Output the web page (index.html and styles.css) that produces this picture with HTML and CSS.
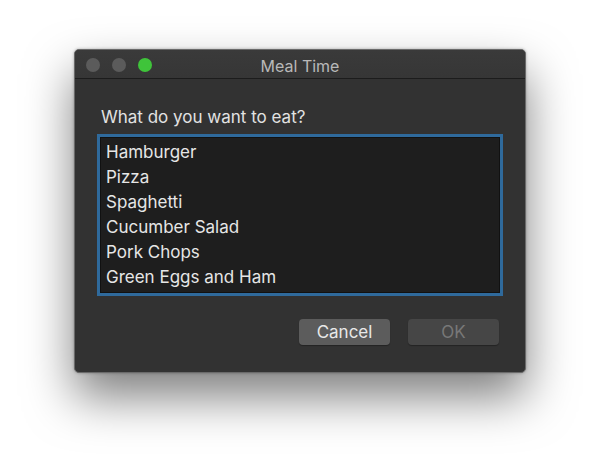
FILE: index.html
```html
<!DOCTYPE html>
<html lang="en">
<head>
  <meta charset="UTF-8">
  <meta name="viewport" content="width=device-width, initial-scale=1.0">
  <title>Meal Time</title>
  <link rel="stylesheet" href="styles.css">
</head>
<body>
  <div class="window">
    <div class="titlebar">
      <div class="lights">
        <span class="light"></span>
        <span class="light"></span>
        <span class="light green"></span>
      </div>
      <div class="title">Meal Time</div>
    </div>
    <div class="content">
      <div class="label">What do you want to eat?</div>
      <ul class="list">
        <li>Hamburger</li>
        <li>Pizza</li>
        <li>Spaghetti</li>
        <li>Cucumber Salad</li>
        <li>Pork Chops</li>
        <li>Green Eggs and Ham</li>
      </ul>
      <div class="actions">
        <button class="btn">Cancel</button>
        <button class="btn disabled">OK</button>
      </div>
    </div>
  </div>
</body>
</html>
```

FILE: styles.css
```css
html, body {
  height: 100%;
}
body {
  font-family: 'Inter', 'Liberation Sans', sans-serif;
  background: #fff;
  margin: 0;
  padding: 49px 0 0 74px;
  box-sizing: border-box;
}
.window {
  width: 452px;
  height: 324px;
  box-sizing: border-box;
  background: #323232;
  border: 1px solid #6a6a6a;
  border-radius: 5px;
  box-shadow: 0 24px 48px rgba(0,0,0,0.5), 0 0 3px rgba(0,0,0,0.3);
  display: flex;
  flex-direction: column;
  overflow: hidden;
}
.titlebar {
  height: 28px;
  background: linear-gradient(#3a3a3a, #363636);
  border-bottom: 1px solid #1c1c1c;
  position: relative;
  display: flex;
  align-items: center;
  justify-content: center;
}
.lights {
  position: absolute;
  left: 11px;
  top: 8px;
  display: flex;
  gap: 12px;
}
.light {
  width: 14px;
  height: 14px;
  border-radius: 50%;
  background: #5b5b5b;
}
.light.green {
  background: #3fc43a;
}
.title {
  color: #b9b9b9;
  font-size: 16px;
  padding-top: 3px;
}
.content {
  flex: 1;
  padding: 28px 22px 27px 22px;
  display: flex;
  flex-direction: column;
}
.label {
  color: #e2e2e2;
  font-size: 17px;
  padding-left: 4px;
  margin-bottom: 7px;
}
.list {
  list-style: none;
  margin: 3px 3px 0 3px;
  padding: 2px 0 0 5px;
  height: 156px;
  box-sizing: border-box;
  background: #1e1e1e;
  border: 1px solid #111;
  box-shadow: 0 0 0 3px #2f6a9c;
}
.list li {
  color: #e6e6e6;
  font-size: 17px;
  line-height: 25px;
}
.actions {
  margin-top: auto;
  display: flex;
  justify-content: flex-end;
  gap: 18px;
  padding-right: 4px;
}
.btn {
  width: 91px;
  height: 26px;
  border: none;
  border-radius: 4px;
  background: #5c5c5c;
  color: #e8e8e8;
  font-family: inherit;
  font-size: 17px;
  box-shadow: 0 1px 1px rgba(0,0,0,0.3);
}
.btn.disabled {
  background: #464646;
  color: #787878;
}
```
